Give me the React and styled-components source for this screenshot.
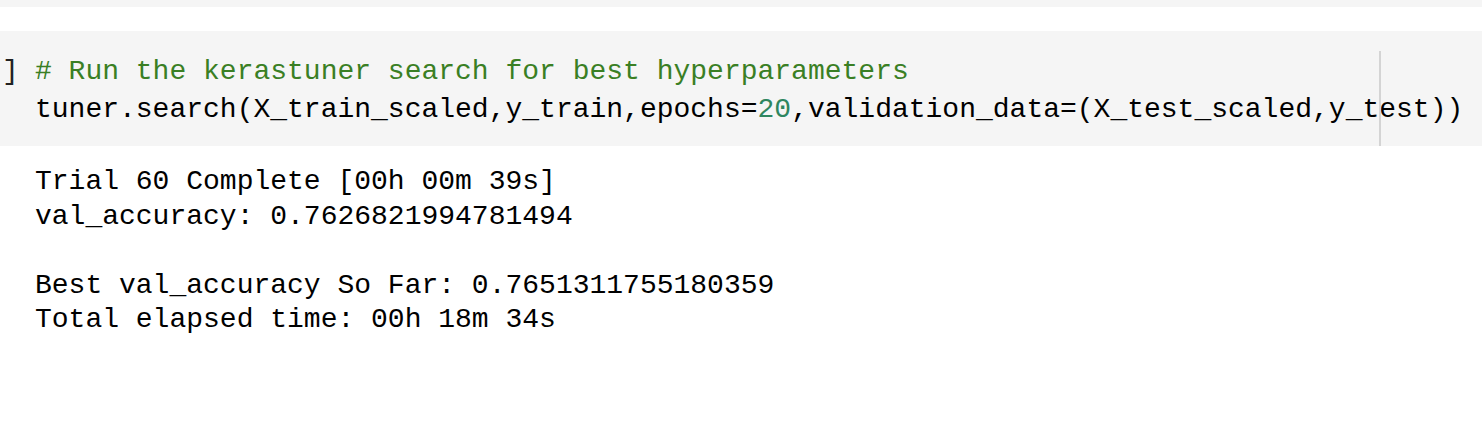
import React from 'react';
import styled, { createGlobalStyle } from 'styled-components';

const GlobalStyle = createGlobalStyle`
    html, body {
        margin: 0;
        padding: 0;
        background: #ffffff;
    }
    body {
        font-family: "Liberation Mono", "Courier New", monospace;
        width: 1482px;
        height: 429px;
        overflow: hidden;
    }
`

const Page = styled.div`
    display: flex;
    flex-direction: column;
`

const PrevCellEdge = styled.div`
    height: 7px;
    background: #f5f5f5;
`

const Gap = styled.div`
    height: 24px;
`

const Cell = styled.div`
    background: #f5f5f5;
    padding-top: 20px;
`

const Editor = styled.div`
    position: relative;
    display: flex;
    padding: 2.4px 0 16.6px 0;
`

const Prompt = styled.div`
    width: 35px;
    box-sizing: border-box;
    padding-left: 2px;
    font-size: 28px;
    line-height: 38px;
    color: #212121;
    white-space: pre;
`

const Code = styled.pre`
    margin: 0;
    font-family: inherit;
    font-size: 28px;
    line-height: 38px;
    color: #000000;
`

const Comment = styled.span`
    color: #3a7f24;
`

const Num = styled.span`
    color: #2f8660;
`

const Ruler = styled.div`
    position: absolute;
    top: 0;
    bottom: 0;
    left: 1379px;
    width: 2px;
    background: #d4d4d4;
`

const Output = styled.pre`
    margin: 0;
    padding: 19.2px 0 0 35px;
    font-family: inherit;
    font-size: 28px;
    line-height: 34.5px;
    color: #000000;
`

const outputText = `Trial 60 Complete [00h 00m 39s]
val_accuracy: 0.7626821994781494

Best val_accuracy So Far: 0.7651311755180359
Total elapsed time: 00h 18m 34s`

export default function App() {
    return (
        <Page>
            <GlobalStyle />
            <PrevCellEdge />
            <Gap />
            <Cell>
                <Editor>
                    <Prompt>]</Prompt>
                    <Code>
                        <Comment># Run the kerastuner search for best hyperparameters</Comment>
                        {'\n'}tuner.search(X_train_scaled,y_train,epochs=<Num>20</Num>,validation_data=(X_test_scaled,y_test))
                    </Code>
                    <Ruler />
                </Editor>
            </Cell>
            <Output>{outputText}</Output>
        </Page>
    );
}
